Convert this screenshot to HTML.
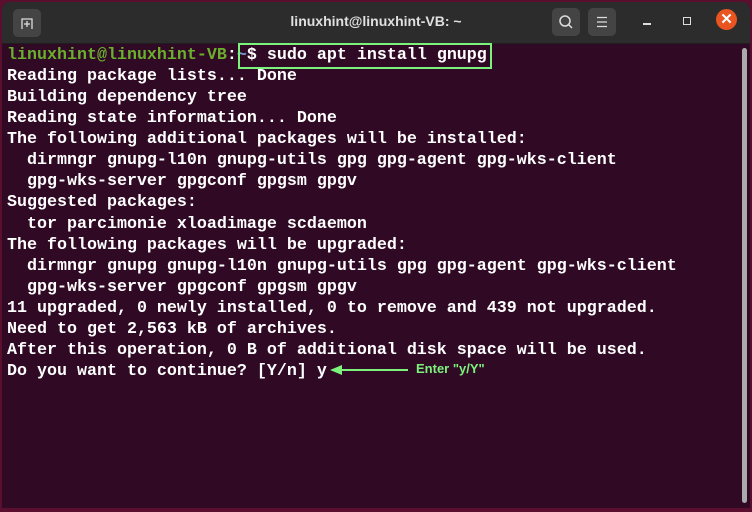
<!DOCTYPE html>
<html><head><style>
body{margin:0;width:752px;height:512px;background:#5a0f2e;overflow:hidden;position:relative;font-family:"Liberation Mono",monospace}
.win{position:absolute;left:2px;top:2px;width:748px;height:506px;background:#300a24;border-radius:8px 8px 0 0;overflow:hidden}
.tb{position:absolute;left:0;top:0;width:748px;height:41px;background:#2c2c2c;border-bottom:1px solid #1e1e1e}
.title{position:absolute;left:0;right:0;top:11px;text-align:center;color:#e0e0e0;font:bold 14px "Liberation Sans",sans-serif}
.btn{position:absolute;top:6px;width:28px;height:28px;background:#444;border-radius:5px}
pre{position:absolute;left:5px;top:43px;margin:0;color:#fff;font:bold 16.67px/21.07px "Liberation Mono",monospace}
.g{color:#6ab02e}.b{color:#729fcf}
.box{position:absolute;left:236px;top:41px;width:250px;height:22px;border:2px solid #7cf27c}
.sb{position:absolute;left:740px;top:46px;width:5px;height:455px;background:#aaa;border-radius:3px}
</style></head><body>
<div class="win">
<div class="tb">
<div class="btn" style="left:11px;top:7px"><svg width="28" height="28"><path d="M9 20V10h10v10M14 12v6M11 15h6" stroke="#ddd" stroke-width="1.3" fill="none"/></svg></div>
<div class="title">linuxhint@linuxhint-VB: ~</div>
<div class="btn" style="left:550px"><svg width="28" height="28"><circle cx="13" cy="13" r="5" stroke="#ddd" stroke-width="1.5" fill="none"/><path d="M16.5 16.5l3.5 3.5" stroke="#ddd" stroke-width="1.5"/></svg></div>
<div class="btn" style="left:586px"><svg width="28" height="28"><path d="M9 9.5h10M9 14h10M9 18.5h10" stroke="#ddd" stroke-width="1.3"/></svg></div>
<div style="position:absolute;left:641px;top:21px;width:8px;height:1.5px;background:#ddd"></div>
<div style="position:absolute;left:681px;top:15px;width:6px;height:6px;border:1.5px solid #ddd"></div>
<div style="position:absolute;left:714px;top:7px;width:21px;height:21px;border-radius:50%;background:#e95420;color:#fff;font:bold 15px/21px 'Liberation Sans',sans-serif;text-align:center">✕</div>
</div>
<pre><span class="g">linuxhint@linuxhint-VB</span>:<span class="b">~</span>$ sudo apt install gnupg
Reading package lists... Done
Building dependency tree
Reading state information... Done
The following additional packages will be installed:
  dirmngr gnupg-l10n gnupg-utils gpg gpg-agent gpg-wks-client
  gpg-wks-server gpgconf gpgsm gpgv
Suggested packages:
  tor parcimonie xloadimage scdaemon
The following packages will be upgraded:
  dirmngr gnupg gnupg-l10n gnupg-utils gpg gpg-agent gpg-wks-client
  gpg-wks-server gpgconf gpgsm gpgv
11 upgraded, 0 newly installed, 0 to remove and 439 not upgraded.
Need to get 2,563 kB of archives.
After this operation, 0 B of additional disk space will be used.
Do you want to continue? [Y/n] y</pre>
<div class="box"></div>
<svg style="position:absolute;left:328px;top:361px" width="80" height="14"><path d="M2 7h76" stroke="#7cf27c" stroke-width="2"/><path d="M0 7l12-5v10z" fill="#7cf27c"/></svg>
<div style="position:absolute;left:414px;top:359px;color:#7cf27c;font:bold 13px 'Liberation Sans',sans-serif">Enter "y/Y"</div>
<div class="sb"></div>
</div>
</body></html>
